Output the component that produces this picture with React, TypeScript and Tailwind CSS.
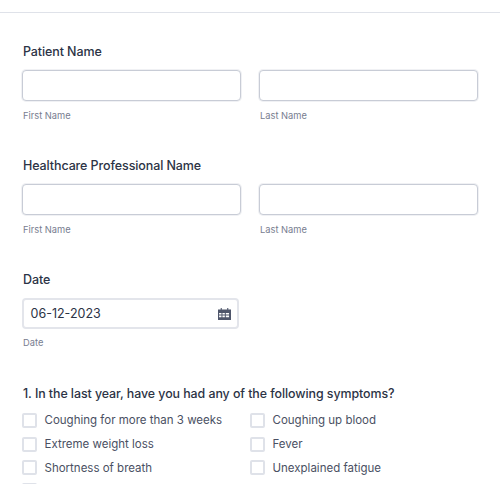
import React from "react";

const leftSymptoms = ["Coughing for more than 3 weeks", "Extreme weight loss", "Shortness of breath"];
const rightSymptoms = ["Coughing up blood", "Fever", "Unexplained fatigue"];

const NameField = ({ label }: { label: string }) => (
  <div>
    <h3 className="text-[12.5px] leading-5 tracking-[-0.1px] font-[450] text-[#2c3345] pl-px">{label}</h3>
    <div className="flex gap-[18px] mt-[8px]">
      {["First Name", "Last Name"].map((sub) => (
        <div key={sub} className="w-[219px]">
          <div className="h-[31px] w-[219px] bg-white border border-[#c8ccd6] rounded-[4px] shadow-[0_0_0_1px_#f0f1f4]" />
          <p className="text-[9.3px] leading-4 text-[#777d8f] mt-[7px] pl-px">{sub}</p>
        </div>
      ))}
    </div>
  </div>
);

const Symptom = ({ text }: { text: string }) => (
  <div className="flex items-center h-[23.7px]">
    <div className="w-[15px] h-[15px] border-2 border-[#dfe2e9] rounded-[2px] bg-white shrink-0" />
    <span className="ml-[7.5px] text-[11.5px] leading-4 text-[#4a5063]">{text}</span>
  </div>
);

export default function App() {
  return (
    <div className="w-[500px] h-[484px] overflow-hidden bg-white font-['Inter',sans-serif]">
      <div className="h-[13px] border-b border-[#dfe2e9]" />
      <div className="pl-[22px] pt-[29px]">
        <NameField label="Patient Name" />
        <div className="mt-[32px]">
          <NameField label="Healthcare Professional Name" />
        </div>

        {/* Date */}
        <div className="mt-[32px]">
          <h3 className="text-[12.5px] leading-5 tracking-[-0.1px] font-[450] text-[#2c3345] pl-px">Date</h3>
          <div className="mt-[8px] h-[31px] w-[217px] flex items-center justify-between pl-[6.5px] pr-[6.5px] border-2 border-[#e3e5eb] rounded-[4px]">
            <span className="text-[12.5px] leading-5 text-[#2c3345]">06-12-2023</span>
            <svg width="13" height="12" viewBox="0 0 12 12" fill="#4f566b" preserveAspectRatio="none">
              <path d="M2.5 0h1v1.5h5V0h1v1.5H12V12H0V1.5h2.5zM1 5v1.6h2.2V5zm3.1 0v1.6h2.2V5zm3.1 0v1.6h3V5zM1 7.6v1.6h2.2V7.6zm3.1 0v1.6h2.2V7.6zm3.1 0v1.6h3V7.6z" fillRule="evenodd" />
            </svg>
          </div>
          <p className="text-[9.3px] leading-4 text-[#777d8f] mt-[6px] pl-px">Date</p>
        </div>

        {/* Symptoms */}
        <div className="mt-[33px]">
          <h3 className="text-[12.4px] leading-5 tracking-[-0.06px] font-[450] text-[#2c3345] pl-px">
            1. In the last year, have you had any of the following symptoms?
          </h3>
          <div className="flex mt-[4.5px]">
            <div className="w-[228px]">
              {leftSymptoms.map((s) => (
                <Symptom key={s} text={s} />
              ))}
              <div className="mt-[3px] w-[15px] h-[15px] border-2 border-[#dfe2e9] rounded-[2px]" />
            </div>
            <div>
              {rightSymptoms.map((s) => (
                <Symptom key={s} text={s} />
              ))}
            </div>
          </div>
        </div>
      </div>
    </div>
  );
}
